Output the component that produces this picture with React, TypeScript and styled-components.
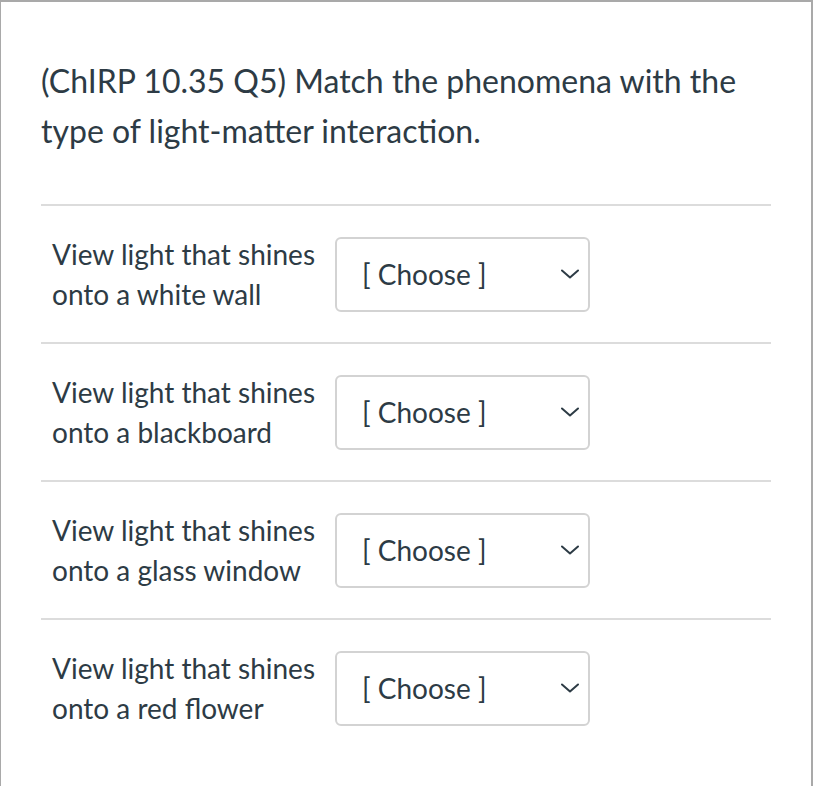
import React from "react";
import styled, { createGlobalStyle } from "styled-components";

const GlobalStyle = createGlobalStyle`
  html, body { margin: 0; padding: 0; background: #ffffff; }
  body { font-family: Lato, "Open Sans", "Liberation Sans", sans-serif; color: #2d3b45; }
`;

const Frame = styled.div`
  box-sizing: border-box;
  width: 813px;
  min-height: 786px;
  border-top: 2px solid #a9a9a9;
  border-left: 1px solid #a9a9a9;
  border-right: 2px solid #a9a9a9;
  padding: 54px 40px 0 40px;
  background: #ffffff;
`;

const Title = styled.h2`
  margin: 0 0 48px 0;
  font-size: 32px;
  line-height: 50px;
  font-weight: 400;
  color: #2d3b45;
`;

const Row = styled.div`
  display: flex;
  align-items: center;
  border-top: 2px solid #dcdcdc;
  padding: 28px 0 28px 11px;
`;

const Label = styled.div`
  width: 283px;
  flex: none;
  font-size: 28px;
  line-height: 40px;
  color: #2d3b45;
`;

const Select = styled.div`
  box-sizing: border-box;
  width: 255px;
  height: 75px;
  border: 2px solid #d3d3d3;
  border-radius: 6px;
  display: flex;
  align-items: center;
  justify-content: space-between;
  padding: 0 9px 0 25px;
  font-size: 28px;
  color: #2d3b45;
  background: #ffffff;
`;

const Chevron = () => (
  <svg width="18" height="10" viewBox="0 0 18 10" fill="none">
    <path d="M1 1.5 L9 8.5 L17 1.5" stroke="#2d3b45" strokeWidth="2" strokeLinecap="round" strokeLinejoin="round" />
  </svg>
);

const items = [
  "View light that shines onto a white wall",
  "View light that shines onto a blackboard",
  "View light that shines onto a glass window",
  "View light that shines onto a red flower",
];

export default function App() {
  return (
    <>
      <GlobalStyle />
      <Frame>
        <Title>(ChIRP 10.35 Q5) Match the phenomena with the type of light-matter interaction.</Title>
        {items.map((t) => (
          <Row key={t}>
            <Label>{t}</Label>
            <Select>
              <span>[ Choose ]</span>
              <Chevron />
            </Select>
          </Row>
        ))}
      </Frame>
    </>
  );
}
